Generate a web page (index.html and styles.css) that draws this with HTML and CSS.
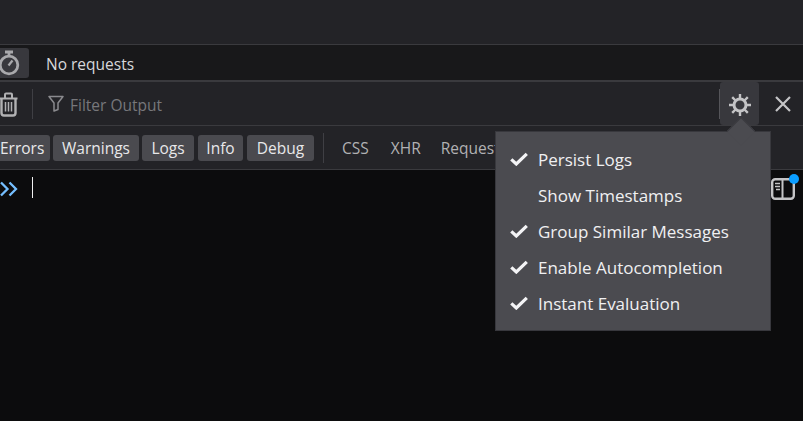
FILE: index.html
```html
<!DOCTYPE html>
<html lang="en">
<head>
<meta charset="utf-8">
<title>Console</title>
<link rel="stylesheet" href="styles.css">
</head>
<body>
<div class="app">
  <div class="topbar"></div>
  <div class="netrow">
    <div class="clockbtn">
      <svg width="24" height="26" viewBox="0 0 24 26" fill="none" stroke="#a9a9ac" stroke-width="2.800"><path d="M8 2h8M12 2v4"/><circle cx="12" cy="15" r="8.800"/><path d="M11.500 15.500l4-5" stroke-width="2.200"/></svg>
    </div>
    <span class="netlabel">No requests</span>
  </div>
  <div class="toolbar">
    <svg class="trash" width="20" height="25" viewBox="0 0 20 25" fill="none" stroke="#b1b1b3" stroke-width="2"><path d="M0.500 6.500h18M6 5.500V2.500q0-1 1-1h5q1 0 1 1v3"/><path d="M2.500 6.500v14.500q0 2.500 2.500 2.500h9q2.500 0 2.500-2.500V6.500" stroke-width="2.400"/><path d="M6.500 10v9.500M9.500 10v9.500M12.500 10v9.500" stroke-width="1.500"/></svg>
    <div class="vsep"></div>
    <svg class="funnel" width="16" height="17" viewBox="0 0 16 17" fill="none" stroke="#8a8a8e" stroke-width="1.500"><path d="M1 1.500h14L10 8v6.500l-4 1.500V8z" stroke-linejoin="round"/></svg>
    <span class="filter">Filter Output</span>
    <div class="spacer"></div>
    <div class="vsep vsep-right"></div>
    <div class="gearbtn">
      <svg width="24" height="24" viewBox="0 0 24 24" fill="none" stroke="#c4c4c6"><circle cx="12" cy="12" r="6" stroke-width="3"/><path d="M12 1v5M12 18v5M1 12h5M18 12h5M4.200 4.200l3.300 3.300M16.500 16.500l3.300 3.300M4.200 19.800l3.300-3.300M16.500 7.500l3.300-3.300" stroke-width="2.400"/></svg>
    </div>
    <svg class="close" width="18" height="18" viewBox="0 0 18 18" fill="none" stroke="#c4c4c6" stroke-width="2.200"><path d="M2 2l14 14M16 2L2 16"/></svg>
  </div>
  <div class="filters">
    <span class="chip chip-first">Errors</span>
    <span class="chip chip-warn">Warnings</span>
    <span class="chip chip-logs">Logs</span>
    <span class="chip chip-info">Info</span>
    <span class="chip chip-debug">Debug</span>
    <div class="vsep vsep-chips"></div>
    <span class="plain plain-css">CSS</span>
    <span class="plain plain-xhr">XHR</span>
    <span class="plain">Requests</span>
  </div>
  <div class="console">
    <svg class="prompt" width="18" height="16" viewBox="0 0 18 16" fill="none" stroke="#75bfff" stroke-width="2.300"><path d="M1 1.500l6.500 6.500L1 14.500M9.500 1.500L16 8l-6.500 6.500"/></svg>
    <div class="caret"></div>
    <div class="spacer"></div>
    <div class="sidebar-toggle">
      <svg width="24" height="22" viewBox="0 0 24 22" fill="none"><rect x="1.200" y="1.200" width="21.600" height="19.600" rx="3" stroke="#c4c4c6" stroke-width="2.400"/><path d="M11.500 1v20" stroke="#c4c4c6" stroke-width="2"/><path d="M4 5.500h5M4 8.500h5M5 11.500h4" stroke="#c4c4c6" stroke-width="1.300"/></svg>
      <span class="dot"></span>
    </div>
  </div>
</div>
<div class="menu">
  <span class="arrow"></span>
  <div class="item"><svg class="check" width="18" height="14" viewBox="0 0 18 14" fill="none" stroke="#f4f4f6" stroke-width="3.200"><path d="M1.300 7.300l5 4.700L16.800 1.800"/></svg><span>Persist Logs</span></div>
  <div class="item"><span class="nocheck"></span><span>Show Timestamps</span></div>
  <div class="item"><svg class="check" width="18" height="14" viewBox="0 0 18 14" fill="none" stroke="#f4f4f6" stroke-width="3.200"><path d="M1.300 7.300l5 4.700L16.800 1.800"/></svg><span>Group Similar Messages</span></div>
  <div class="item"><svg class="check" width="18" height="14" viewBox="0 0 18 14" fill="none" stroke="#f4f4f6" stroke-width="3.200"><path d="M1.300 7.300l5 4.700L16.800 1.800"/></svg><span>Enable Autocompletion</span></div>
  <div class="item"><svg class="check" width="18" height="14" viewBox="0 0 18 14" fill="none" stroke="#f4f4f6" stroke-width="3.200"><path d="M1.300 7.300l5 4.700L16.800 1.800"/></svg><span>Instant Evaluation</span></div>
</div>
</body>
</html>
```
FILE: styles.css
```css
* { box-sizing: border-box; }
html, body { margin: 0; height: 100%; overflow: hidden; background: #0c0c0d; }
body { font-family: "Open Sans", "Noto Sans", sans-serif; font-size: 15.5px; color: #d7d7db; }
.app { display: flex; flex-direction: column; height: 421px; }
.spacer { flex: 1; }

.topbar { height: 45px; background: #232327; border-bottom: 1px solid #3a3a3e; }

.netrow { height: 35px; display: flex; align-items: center; background: #18181a; padding-top: 1px; }
.clockbtn { width: 29px; height: 30px; display: flex; align-items: center; justify-content: flex-end; padding-right: 8px; background: #38383d; border-radius: 0 3px 3px 0; overflow: hidden; }
.clockbtn svg { flex: none; margin-left: -4px; }
.netlabel { margin-left: 17px; margin-top: 2px; }

.toolbar { height: 46px; display: flex; align-items: center; background: #232327; border-top: 2px solid #3a3a3e; border-bottom: 1px solid #3a3a3e; }
.trash { margin-left: -1px; margin-top: 2px; flex: none; }
.vsep { width: 1px; height: 30px; background: #3f3f44; margin-left: 13px; flex: none; }
.funnel { margin-left: 15px; flex: none; }
.filter { margin-left: 6px; margin-top: 2px; color: #77777b; }
.vsep-right { margin: 0; background: #55555a; }
.gearbtn { width: 39px; height: 43px; padding-top: 2px; display: flex; align-items: center; justify-content: center; background: #38383d; border-radius: 3px; }
.close { margin-left: 15px; margin-right: 11px; flex: none; }

.filters { height: 44px; display: flex; align-items: center; background: #232327; border-bottom: 1px solid #3a3a3e; }
.chip { height: 26px; display: flex; align-items: center; justify-content: center; background: #4a4a4f; border-radius: 3px; color: #e8e8ea; margin-right: 3px; }
.chip-first { width: 50px; justify-content: flex-start; border-radius: 0 3px 3px 0; }
.chip-warn { width: 86px; }
.chip-logs { width: 52px; margin-right: 4px; }
.chip-info { width: 45px; margin-right: 4px; }
.chip-debug { width: 67px; margin-right: 0; }
.vsep-chips { margin: 0 18px 0 9px; height: 30px; }
.plain { color: #b1b1b3; white-space: nowrap; }
.plain-css { margin-right: 22px; }
.plain-xhr { margin-right: 20px; }

.console { flex: 1; display: flex; align-items: flex-start; background: #0c0c0d; padding-top: 7px; }
.prompt { flex: none; margin-top: 4px; }
.caret { width: 1px; height: 21px; background: #f0f0f0; margin-left: 14px; }
.sidebar-toggle { position: relative; width: 24px; height: 22px; margin-top: 1px; margin-right: 8px; }
.sidebar-toggle svg { display: block; }
.dot { position: absolute; top: -4px; right: -4px; width: 10px; height: 10px; border-radius: 50%; background: #0a9dff; }

.menu { position: absolute; left: 495px; top: 131px; width: 276px; height: 200px; padding-top: 9px; background: #4b4b50; border: 1px solid #38383d; font-size: 17px; }
.arrow { position: absolute; left: 235px; top: -11px; width: 20px; height: 20px; background: #4b4b50; transform: rotate(45deg); border-left: 1px solid #38383d; border-top: 1px solid #38383d; }
.item { position: relative; height: 36px; display: flex; align-items: center; padding-left: 14px; color: #f0f0f2; white-space: nowrap; }
.check { flex: none; margin-right: 10px; }
.nocheck { width: 28px; flex: none; }
```
